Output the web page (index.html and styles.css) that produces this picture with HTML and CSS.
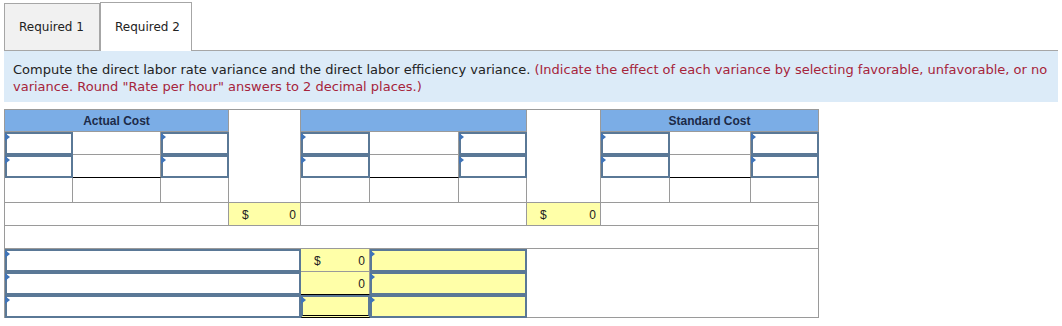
FILE: index.html
```html
<!DOCTYPE html>
<html>
<head>
<meta charset="utf-8">
<link rel="stylesheet" href="styles.css">
</head>
<body>
<div class="tabs">
  <div class="tab">Required 1</div>
  <div class="tab active">Required 2</div>
</div>
<div class="prompt">Compute the direct labor rate variance and the direct labor efficiency variance. <span class="hint">(Indicate the effect of each variance by selecting favorable, unfavorable, or no variance. Round "Rate per hour" answers to 2 decimal places.)</span></div>
<div class="grid">
  <div class="c hd">Actual Cost</div>
  <div class="c tall"></div>
  <div class="c hd"></div>
  <div class="c tall"></div>
  <div class="c hd">Standard Cost</div>

  <div class="c sel"></div><div class="c"></div><div class="c sel"></div>
  <div class="c sel"></div><div class="c"></div><div class="c sel"></div>
  <div class="c sel"></div><div class="c"></div><div class="c sel"></div>

  <div class="c sel"></div><div class="c sum"></div><div class="c sel"></div>
  <div class="c sel"></div><div class="c sum"></div><div class="c sel"></div>
  <div class="c sel"></div><div class="c sum"></div><div class="c sel"></div>

  <div class="c"></div><div class="c"></div><div class="c"></div>
  <div class="c"></div><div class="c"></div><div class="c"></div>
  <div class="c"></div><div class="c"></div><div class="c"></div>

  <div class="c span3"></div>
  <div class="c money"><span>$</span><span>0</span></div>
  <div class="c span3"></div>
  <div class="c money"><span>$</span><span>0</span></div>
  <div class="c span3"></div>

  <div class="c full"></div>

  <div class="c sel span4"></div>
  <div class="c money"><span>$</span><span>0</span></div>
  <div class="c sel yel span2"></div>
  <div class="c blank"></div>

  <div class="c sel span4"></div>
  <div class="c money right sum"><span>0</span></div>
  <div class="c sel yel span2"></div>

  <div class="c sel span4"></div>
  <div class="c sel yel dbl"></div>
  <div class="c sel yel span2"></div>
</div>
</body>
</html>
```
FILE: styles.css
```css
body {
  margin: 0;
  font-family: "DejaVu Sans", Verdana, sans-serif;
  color: #222;
  background: #fff;
}
.tabs {
  display: flex;
  align-items: flex-end;
  margin: 3px 4px 0;
  height: 48px;
  border-bottom: 1px solid #a6a6a6;
  box-sizing: border-box;
}
.tab {
  box-sizing: border-box;
  height: 47px;
  width: 96px;
  padding: 0 0 0 14px;
  display: flex;
  align-items: center;
  font-size: 12px;
  background: #f1f1f1;
  border: 1px solid #a6a6a6;
  border-bottom: none;
}
.tab.active {
  background: #fff;
  height: 49px;
  width: 92px;
  margin-bottom: -1px;
  padding-left: 14px;
  padding-bottom: 1px;
}
.prompt {
  margin: 0 4px;
  background: #dcebf8;
  padding: 10px 9px 7px;
  font-size: 13px;
  line-height: 17px;
  color: #222;
}
.hint {
  color: #a6243b;
}
.grid {
  display: grid;
  grid-template-columns: 68px 88px 68px 72px 69px 89px 68px 74px 69px 81px 68px;
  grid-template-rows: 22px 23px 23px 25px 23px 23px 23px 23px 23px;
  width: max-content;
  margin: 7px 0 0 4px;
  border-top: 1px solid #9a9a9a;
  border-left: 1px solid #9a9a9a;
  font-family: "Liberation Sans", Arial, sans-serif;
  font-size: 12px;
}
.c {
  box-sizing: border-box;
  border-right: 1px solid #9a9a9a;
  border-bottom: 1px solid #9a9a9a;
  background: #fff;
}
.hd {
  grid-column: span 3;
  background: #7badE6;
  font-weight: bold;
  color: #1c2a48;
  text-align: center;
  line-height: 23px;
}
.tall {
  grid-row: span 4;
}
.span3 { grid-column: span 3; }
.span4 { grid-column: span 4; }
.span2 { grid-column: span 2; }
.full { grid-column: 1 / -1; }
.blank {
  grid-column: span 4;
  grid-row: span 3;
}
.sum {
  border-bottom-color: #000;
}
.sel {
  position: relative;
  border: 2px solid #5a7896;
}
.sel::before {
  content: "";
  position: absolute;
  left: -2px;
  top: -1px;
  width: 0;
  height: 0;
  border-left: 5px solid #3f74b8;
  border-top: 4px solid transparent;
  border-bottom: 4px solid transparent;
  z-index: 1;
}
.yel {
  background: #ffffa8;
}
.dbl {
  border-bottom: 3px double #000;
}
.money {
  background: #ffffa8;
  display: flex;
  justify-content: space-between;
  align-items: center;
  padding: 1px 4px 0 13px;
  color: #222;
}
.money.right {
  justify-content: flex-end;
}
```
